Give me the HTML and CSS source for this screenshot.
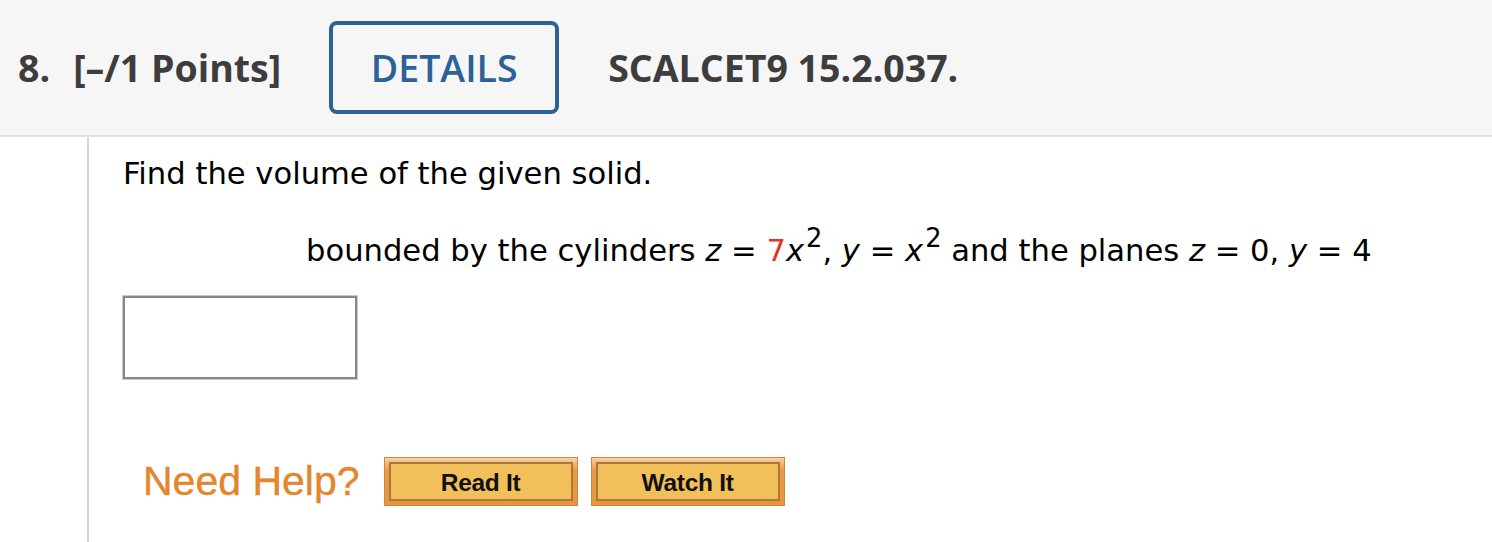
FILE: index.html
```html
<!DOCTYPE html>
<html>
<head>
<meta charset="utf-8">
<link rel="stylesheet" href="styles.css">
</head>
<body>
<div class="header">
  <span class="qnum">8.</span>
  <span class="points">[–/1 Points]</span>
  <span class="details">DETAILS</span>
  <span class="code">SCALCET9 15.2.037.</span>
</div>
<div class="body">
  <div class="content">
    <p class="prompt">Find the volume of the given solid.</p>
    <p class="eq">bounded by the cylinders <i>z</i> = <span class="red">7</span><i>x</i><sup>2</sup>, <i>y</i> = <i>x</i><sup>2</sup> and the planes <i>z</i> = 0, <i>y</i> = 4</p>
    <div class="answer"></div>
    <div class="help">
      <span class="need">Need Help?</span>
      <span class="btn"><span class="btn-inner">Read It</span></span>
      <span class="btn"><span class="btn-inner">Watch It</span></span>
    </div>
  </div>
</div>
</body>
</html>
```
FILE: styles.css
```css
html, body {
  margin: 0;
  padding: 0;
  background: #ffffff;
}
.header {
  height: 135px;
  background: #f6f6f6;
  border-bottom: 2px solid #e2e2e2;
  display: flex;
  align-items: center;
  padding-left: 18px;
  font-family: "Open Sans", sans-serif;
  font-weight: 700;
  color: #3d3d3d;
  font-size: 37.5px;
}
.qnum {
  margin-right: 23px;
}
.points {
  margin-right: 48px;
}
.details {
  box-sizing: border-box;
  flex: 0 0 230px;
  width: 230px;
  height: 93px;
  border: 4px solid #2c6296;
  border-radius: 8px;
  display: flex;
  align-items: center;
  justify-content: center;
  color: #2c6296;
  font-weight: 600;
  margin-right: 49px;
}
.code {
  font-weight: 700;
}
.body {
  padding-left: 87px;
  height: 405px;
}
.content {
  border-left: 2px solid #d6d6d6;
  height: 100%;
  padding-left: 34px;
  font-family: "DejaVu Sans", Verdana, sans-serif;
  font-size: 30.6px;
  color: #000;
}
.prompt {
  margin: 0;
  padding-top: 19px;
}
.eq {
  margin: 0;
  padding-top: 42px;
  padding-left: 183px;
}
.eq i {
  font-style: italic;
}
.eq sup {
  font-size: 0.84em;
  line-height: 0;
  vertical-align: 0.56em;
  margin-left: 2px;
}
.red {
  color: #e8321e;
}
.answer {
  margin-top: 28px;
  box-sizing: border-box;
  width: 234px;
  height: 83px;
  border: 2px solid #888888;
  outline: 1px solid #c8c8c8;
  background: #fff;
}
.help {
  display: flex;
  align-items: center;
  margin-top: 78px;
  padding-left: 20px;
}
.need {
  font-family: "Liberation Sans", Arial, sans-serif;
  font-size: 41px;
  color: #e3862c;
  margin-right: 24px;
  -webkit-text-stroke: 0.4px #e3862c;
}
.btn {
  box-sizing: border-box;
  flex: 0 0 194px;
  width: 194px;
  height: 49px;
  padding: 4px;
  background: linear-gradient(#f8d3a0, #ea9b45 25%, #e8953a);
  border: 1px solid #c98a45;
  margin-right: 13px;
  display: flex;
}
.btn-inner {
  flex: 1;
  border: 2px solid #a8783e;
  background: #f2c05a;
  display: flex;
  align-items: center;
  justify-content: center;
  padding-top: 3px;
  font-family: "Liberation Sans", Arial, sans-serif;
  font-weight: 700;
  font-size: 24.5px;
  letter-spacing: -0.3px;
  color: #111;
}
```
